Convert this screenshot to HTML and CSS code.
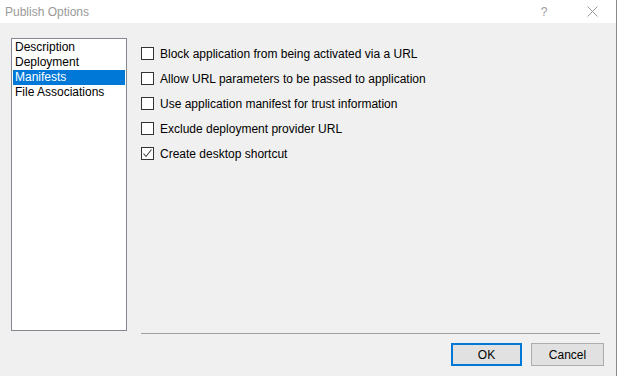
FILE: index.html
```html
<!DOCTYPE html>
<html>
<head>
<meta charset="utf-8">
<link rel="stylesheet" href="styles.css">
</head>
<body>
<div class="window">
  <div class="titlebar">
    <span class="title">Publish Options</span>
    <span class="help">?</span>
    <span class="close"><svg width="11" height="11" viewBox="0 0 11 11"><path d="M0.5 0.5L10.5 10.5M10.5 0.5L0.5 10.5" stroke="#9a9a9a" stroke-width="1" fill="none"/></svg></span>
  </div>
  <div class="body">
    <div class="main">
      <ul class="list">
        <li>Description</li>
        <li>Deployment</li>
        <li class="selected">Manifests</li>
        <li>File Associations</li>
      </ul>
      <div class="pane">
        <div class="options">
          <label class="opt"><span class="box"></span><span>Block application from being activated via a URL</span></label>
          <label class="opt"><span class="box"></span><span>Allow URL parameters to be passed to application</span></label>
          <label class="opt"><span class="box"></span><span>Use application manifest for trust information</span></label>
          <label class="opt"><span class="box"></span><span>Exclude deployment provider URL</span></label>
          <label class="opt"><span class="box checked"><svg width="11" height="11" viewBox="0 0 11 11"><path d="M1.5 5.5L4 8.5L9.5 1.5" stroke="#444" stroke-width="1.1" fill="none"/></svg></span><span>Create desktop shortcut</span></label>
        </div>
        <div class="sep"></div>
      </div>
    </div>
    <div class="buttons">
      <button class="btn default">OK</button>
      <button class="btn">Cancel</button>
    </div>
  </div>
</div>
</body>
</html>
```
FILE: styles.css
```css
html, body {
  margin: 0;
  padding: 0;
}
body {
  width: 618px;
  height: 376px;
  overflow: hidden;
  font-family: "Liberation Sans", Arial, sans-serif;
  font-size: 12px;
  color: #000;
}
.window {
  width: 617px;
  height: 376px;
  border-right: 1px solid #8a8a8a;
  box-sizing: border-box;
  display: flex;
  flex-direction: column;
  background: #f0f0f0;
}
.titlebar {
  height: 23px;
  background: #fff;
  display: flex;
  align-items: center;
  color: #9a9a9a;
  font-size: 12px;
}
.title {
  padding-left: 5px;
  flex: 1;
}
.help {
  width: 48px;
  text-align: center;
  margin-right: 4px;
}
.close {
  width: 40px;
  display: flex;
  justify-content: center;
  margin-right: 4px;
}
.body {
  flex: 1;
  display: flex;
  flex-direction: column;
  padding: 15px 0 0 11px;
}
.main {
  display: flex;
}
.list {
  margin: 0;
  padding: 1px;
  list-style: none;
  width: 116px;
  height: 293px;
  box-sizing: border-box;
  background: #fff;
  border: 1px solid #828790;
}
.list li {
  height: 15px;
  line-height: 15px;
  padding-left: 2px;
}
.list li.selected {
  background: #0078d7;
  color: #fff;
}
.pane {
  margin-left: 14px;
  width: 459px;
  display: flex;
  flex-direction: column;
}
.options {
  height: 295px;
  padding-top: 9px;
  box-sizing: border-box;
  display: flex;
  flex-direction: column;
  gap: 12px;
}
.opt {
  display: flex;
  align-items: center;
  height: 13px;
  gap: 6px;
}
.box {
  width: 13px;
  height: 13px;
  box-sizing: border-box;
  border: 1px solid #333;
  background: #fff;
  display: flex;
  align-items: center;
  justify-content: center;
}
.box.checked svg {
  display: block;
}
.sep {
  height: 1px;
  background: #a0a0a0;
}
.buttons {
  display: flex;
  justify-content: flex-end;
  gap: 9px;
  padding-right: 12px;
  margin-top: 9px;
}
.btn {
  width: 73px;
  height: 23px;
  box-sizing: border-box;
  background: #e1e1e1;
  border: 1px solid #adadad;
  font-family: inherit;
  font-size: 12px;
  color: #000;
  padding: 0;
}
.btn.default {
  border: 2px solid #0078d7;
  width: 71px;
}
```
